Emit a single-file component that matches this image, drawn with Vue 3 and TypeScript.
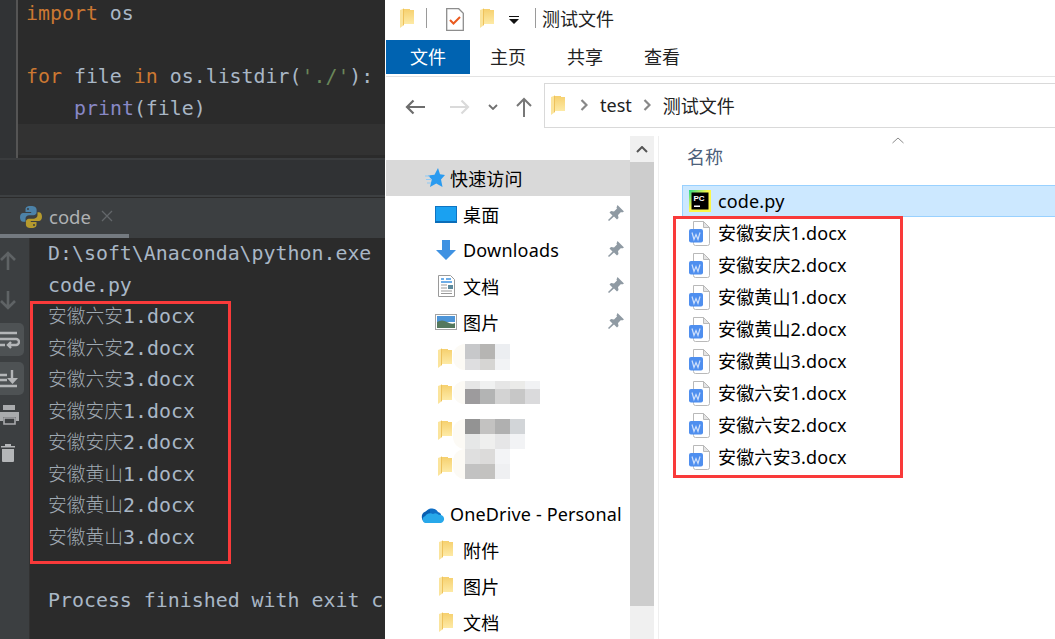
<script setup lang="ts">
const consoleLines = [
  ['安徽六安', '1.docx'], ['安徽六安', '2.docx'], ['安徽六安', '3.docx'],
  ['安徽安庆', '1.docx'], ['安徽安庆', '2.docx'],
  ['安徽黄山', '1.docx'], ['安徽黄山', '2.docx'], ['安徽黄山', '3.docx'],
]
const files = ['安徽安庆1', '安徽安庆2', '安徽黄山1', '安徽黄山2', '安徽黄山3', '安徽六安1', '安徽六安2', '安徽六安3']
  .map((n) => n + '.docx')
const pinned = [
  { label: '桌面', icon: 'desk' }, { label: 'Downloads', icon: 'down' },
  { label: '文档', icon: 'doc' }, { label: '图片', icon: 'pic' },
]
const blurred = [
  { top: 4, columns: 3, first: 15, second: 11, cells: ['#c7c8ca', '#b6b5b3', '#eceef1', '#dedee0', '#d6d5d3', '#f2f3f5'] },
  { top: 5, columns: 5, first: 8, second: 15, cells: ['#e6e6e6', '#f0f1f1', '#e6e6e6', '#ebebe9', '#f1f2f4', '#9d9b9d', '#b3b4b4', '#d3d3d3', '#c7c7c7', '#dadadc'] },
  { top: 7, columns: 4, first: 15, second: 15, cells: ['#939393', '#c3c2c1', '#b0b0b0', '#d2d5d8', '#e6e7e7', '#efefee', '#e6e6e7', '#f2f3f5'] },
  { top: 1, columns: 3, first: 15, second: 15, cells: ['#dfdfdf', '#dcdbda', '#f3f4f6', '#c2c2c2', '#c3c2c0', '#eff0f2'] },
]
const oneDrive = ['附件', '图片', '文档']
</script>

<template>
  <div class="root">
    <svg class="defs" width="0" height="0" aria-hidden="true">
      <defs>
        <linearGradient id="fgrad" x1="0" y1="0" x2="0" y2="1">
          <stop offset="0" stop-color="#f6d06e" />
          <stop offset="1" stop-color="#fdeaa6" />
        </linearGradient>
        <symbol id="folder" viewBox="0 0 14 20">
          <path d="M3 1h7v1h4v14H3z" fill="url(#fgrad)" />
          <path d="M0 2l4-1.500V17L0 20z" fill="#fbe49c" />
          <path d="M4 .5V17l-1 .4V1z" fill="#eec25c" />
        </symbol>
        <symbol id="pin" viewBox="0 0 18 18">
          <path d="M10.500 1l6.500 6.500-2 1-1-.5-3 3 .5 3-1.500 1.500-3-3L2 17l-1-1 4.500-4.500-3-3L4 7l3 .5 3-3-.5-1z" fill="#8f9aa3" />
        </symbol>
        <symbol id="word" viewBox="0 0 21 25">
          <path d="M4.500.5h10l6 6v16a2 2 0 0 1-2 2h-12a2 2 0 0 1-2-2z" fill="#fff" stroke="#b9b9b9" />
          <path d="M14.500.5v6h6z" fill="#e4e4e4" stroke="#b9b9b9" />
          <rect y="8" width="14" height="13.500" rx="2" fill="#4f8fef" />
          <path d="M3 11.500l2 7 2-5 2 5 2-7" fill="none" stroke="#cfe0fb" stroke-width="1.200" />
        </symbol>
      </defs>
    </svg>

    <section class="ide">
      <div class="editor">
        <div class="gutter"></div>
        <div class="code">
          <div class="cl"><span class="kw">import</span> os</div>
          <div class="cl"></div>
          <div class="cl"><span class="kw">for</span> file <span class="kw">in</span> os.listdir(<span class="str">'./'</span>):</div>
          <div class="cl indent"><span class="fn">print</span>(file)</div>
          <div class="cl current"></div>
        </div>
      </div>
      <div class="runbar"></div>
      <div class="tabs">
        <div class="run-tab">
          <svg class="py" viewBox="0 0 22 22" width="22" height="22">
            <path d="M10.800 0C6 0 5.500 1.800 5.500 3.500V6h5.700v1H3.200C1.200 7 0 8.700 0 11.200s1.200 4.500 3.200 4.500h2.300v-2.900c0-2 1.700-3.500 3.600-3.500h4.500c1.700 0 3-1.400 3-3V3.500C16.600 1.600 14.800 0 10.800 0zM8 2a1 1 0 1 1 0 2 1 1 0 0 1 0-2z" fill="#4c82a8" />
            <path d="M11.200 22c4.800 0 5.300-1.800 5.300-3.500V16h-5.700v-1h8c2 0 3.200-1.700 3.200-4.200s-1.200-4.500-3.200-4.500h-1.300v2.900c0 2-2.200 3.500-4.100 3.500H8.900c-1.700 0-3 1.400-3 3v2.800c0 1.900 1.300 3.500 5.300 3.500zM14 20a1 1 0 1 1 0-2 1 1 0 0 1 0 2z" fill="#b59a2e" />
          </svg>
          <span class="run-name">code</span>
          <svg class="x" viewBox="0 0 12 12" width="12" height="12"><path d="M1 1l10 10M11 1L1 11" stroke="#63676a" stroke-width="1.300" /></svg>
        </div>
      </div>
      <div class="run">
        <div class="side">
          <svg class="ti up" viewBox="0 0 16 20" width="16" height="20"><path d="M8 19V2M1 9l7-7 7 7" fill="none" stroke="#5f6365" stroke-width="2.600" /></svg>
          <svg class="ti dn" viewBox="0 0 16 20" width="16" height="20"><path d="M8 1v17M1 11l7 7 7-7" fill="none" stroke="#5f6365" stroke-width="2.600" /></svg>
          <div class="tbtn first">
            <svg viewBox="0 0 20 18" width="20" height="18"><path d="M0 2h17M0 8h16a2.500 2.500 0 0 1 0 6H9M0 14h5M11 11l-3 3 3 3" fill="none" stroke="#b4b6b8" stroke-width="2.400" /></svg>
          </div>
          <div class="tbtn second">
            <svg viewBox="0 0 20 20" width="20" height="20"><path d="M0 6h7M0 11h7M0 17h17M12 1v11" fill="none" stroke="#b4b6b8" stroke-width="2.400" /><path d="M7 9h11l-5.500 6z" fill="#b4b6b8" /></svg>
          </div>
          <svg class="ti pr" viewBox="0 0 20 20" width="20" height="20"><path d="M3 0h12v5H3zM0 7h19v9h-3v-4H3v4H0z" fill="#a9abad" /><path d="M4 13h11v6H4z" fill="none" stroke="#a9abad" stroke-width="1.600" /></svg>
          <svg class="ti tr" viewBox="0 0 16 19" width="16" height="19"><path d="M1 3h14v1.600H1zM5 1h6v2H5zM2 6h12v12a1 1 0 0 1-1 1H3a1 1 0 0 1-1-1z" fill="#b4b6b8" /></svg>
        </div>
        <div class="out">
          <div class="ol">D:\soft\Anaconda\python.exe</div>
          <div class="ol">code.py</div>
          <div class="redbox-left">
            <div v-for="l in consoleLines" :key="l[0] + l[1]" class="ol"><span class="zh">{{ l[0] }}</span>{{ l[1] }}</div>
          </div>
          <div class="ol finish">Process finished with exit c</div>
        </div>
      </div>
    </section>

    <section class="ex">
      <header class="title">
        <svg class="f f-t1"><use href="#folder" /></svg>
        <i class="sep s1"></i>
        <svg class="chk" viewBox="0 0 18 23" width="18" height="23">
          <path d="M.7.7h12l4.600 4.600v17H.7z" fill="#fff" stroke="#8d8d8d" stroke-width="1.300" />
          <path d="M4 12l3.500 3.500L14 9" fill="none" stroke="#ea5a1f" stroke-width="2" />
        </svg>
        <svg class="f f-t2"><use href="#folder" /></svg>
        <svg class="drop" viewBox="0 0 10 8" width="10" height="8"><path d="M0 0h10v1H0zM0 3h10L5 8z" fill="#111" /></svg>
        <i class="sep s2"></i>
        <span class="title-text">测试文件</span>
      </header>
      <nav class="ribbon">
        <span class="rtab active">文件</span>
        <span class="rtab t1">主页</span>
        <span class="rtab t2">共享</span>
        <span class="rtab t3">查看</span>
      </nav>
      <div class="navbar">
        <svg class="back" viewBox="0 0 20 16" width="20" height="16"><path d="M20 8H2M8.500 1.500L2 8l6.500 6.500" fill="none" stroke="#6d6d6d" stroke-width="2.200" /></svg>
        <svg class="fwd" viewBox="0 0 20 16" width="20" height="16"><path d="M0 8h18M11.500 1.500L18 8l-6.500 6.500" fill="none" stroke="#dadada" stroke-width="2.200" /></svg>
        <svg class="chev" viewBox="0 0 10 6" width="10" height="6"><path d="M1 1l4 4 4-4" fill="none" stroke="#707070" stroke-width="1.800" /></svg>
        <svg class="upa" viewBox="0 0 16 20" width="16" height="20"><path d="M8 20V2M1 9l7-7 7 7" fill="none" stroke="#777" stroke-width="2" /></svg>
        <div class="addr">
          <svg class="f"><use href="#folder" /></svg>
          <svg class="crumb c1" viewBox="0 0 8 12" width="8" height="12"><path d="M1.500 1l5 5-5 5" fill="none" stroke="#888" stroke-width="2.200" /></svg>
          <span class="path-a">test</span>
          <svg class="crumb c2" viewBox="0 0 8 12" width="8" height="12"><path d="M1.500 1l5 5-5 5" fill="none" stroke="#888" stroke-width="2.200" /></svg>
          <span class="path-b">测试文件</span>
        </div>
      </div>
      <div class="main">
        <aside class="tree">
          <div class="row quick">
            <svg class="star" viewBox="0 0 20 20" width="20" height="20">
              <path d="M13 0l2 6.200 5 .8-4 4.500 1.500 7.500-6.200-3.600L5 19l1.800-7.500L3 7.500l6.500-.8z" fill="#2a9bf0" />
              <path d="M0 8h5M1 11.500h5M2 15h4" stroke="#8ec9f5" stroke-width="1.200" />
            </svg>
            <span class="quick-t">快速访问</span>
          </div>
          <div v-for="p in pinned" :key="p.label" class="row sub">
            <span class="ico">
              <svg v-if="p.icon === 'desk'" viewBox="0 0 22 17" width="22" height="17">
                <rect x=".5" y=".5" width="21" height="15" fill="#1aa1f1" stroke="#0f74c2" />
                <path d="M0 15h22v2H0z" fill="#0b6db8" />
              </svg>
              <svg v-else-if="p.icon === 'down'" viewBox="0 0 20 20" width="20" height="20">
                <path d="M6 0h8v10h6L10 20 0 10h6z" fill="#3f92e2" />
              </svg>
              <svg v-else-if="p.icon === 'doc'" viewBox="0 0 17 22" width="17" height="22">
                <path d="M.5.500h12l4 4v17H.5z" fill="#fff" stroke="#9a9a9a" />
                <path d="M3 4h3M8 4h5M3 7h11" stroke="#3f93e0" stroke-width="1.300" />
                <path d="M3 10h6M3 13h6M3 16h11M3 18.500h11" stroke="#999" />
                <rect x="10" y="10" width="5" height="4" fill="#5d8a9c" />
              </svg>
              <svg v-else viewBox="0 0 22 16" width="22" height="16">
                <rect x=".5" y=".5" width="21" height="15" fill="#fff" stroke="#a4a4a4" />
                <rect x="2" y="2" width="18" height="6" fill="#4d95d8" />
                <path d="M2 8q5-3 10 0t8 1v5H2z" fill="#54785d" />
              </svg>
            </span>
            <span class="lab">{{ p.label }}</span>
            <svg class="pin"><use href="#pin" /></svg>
          </div>
          <div v-for="(b, i) in blurred" :key="i" class="row sub blur-row">
            <span class="ico"><svg class="f"><use href="#folder" /></svg></span>
            <div class="cream" :style="{ marginTop: b.top + 'px', height: b.first + b.second + 'px' }"></div>
            <div class="mosaic" :style="{ marginTop: b.top + 'px', gridTemplateColumns: `repeat(${b.columns}, 15px)`, gridTemplateRows: `${b.first}px ${b.second}px` }">
              <i v-for="(c, j) in b.cells" :key="j" :style="{ background: c }"></i>
            </div>
          </div>
          <div class="row drive">
            <svg class="cloud" viewBox="0 0 24 17" width="24" height="17">
              <path d="M4 8.500a7 7 0 0 1 13-2.500 5 5 0 0 1 3 2v2H4z" fill="#0f6fc6" />
              <path d="M6 17a6 6 0 0 1-1.500-11.500A7 7 0 0 1 9 4v4z" fill="#0a5fb0" />
              <path d="M5 17a3.500 3.500 0 0 1-1-6.800 6 6 0 0 1 8-2.200 5 5 0 0 1 6 1 4 4 0 0 1 2 8z" fill="#28a8ea" />
            </svg>
            <span class="quick-t">OneDrive - Personal</span>
          </div>
          <div v-for="d in oneDrive" :key="d" class="row sub">
            <span class="ico"><svg class="f"><use href="#folder" /></svg></span>
            <span class="lab">{{ d }}</span>
          </div>
        </aside>
        <div class="scroll">
          <div class="sb-up"><svg viewBox="0 0 12 7" width="12" height="7"><path d="M1 6l5-5 5 5" fill="none" stroke="#555" stroke-width="2" /></svg></div>
          <div class="sb-thumb"></div>
        </div>
        <div class="list">
          <div class="list-head">
            <span class="col">名称</span>
            <svg class="caret" viewBox="0 0 12 7" width="12" height="7"><path d="M.5 6L6 1l5.500 5" fill="none" stroke="#8a8a8a" /></svg>
          </div>
          <div class="item selected">
            <svg class="pc" viewBox="0 0 22 22" width="22" height="22">
              <defs><linearGradient id="pcg" x1="0" y1="0" x2="1" y2="1"><stop offset="0" stop-color="#21d789" /><stop offset=".45" stop-color="#fcf84a" /></linearGradient></defs>
              <rect width="22" height="22" fill="url(#pcg)" />
              <rect x="2.500" y="2.500" width="17" height="17" fill="#000" />
              <rect x="5" y="15.500" width="6" height="1.500" fill="#fff" />
              <text x="4.500" y="11" class="pc-t">PC</text>
            </svg>
            <span>code.py</span>
          </div>
          <div v-for="f in files" :key="f" class="item">
            <svg class="w"><use href="#word" /></svg>
            <span>{{ f }}</span>
          </div>
          <div class="redbox-right"></div>
        </div>
      </div>
    </section>
  </div>
</template>

<style>
html, body { margin: 0; background: #fff; overflow: hidden; }
</style>

<style scoped>
.root { display: flex; width: 1055px; height: 639px; overflow: hidden; font-family: "Noto Sans", "Noto Sans CJK SC", sans-serif; }
.defs { position: absolute; }
.ide { width: 385px; flex: none; display: flex; flex-direction: column; background: #2b2b2b; font-family: "DejaVu Sans Mono", "Noto Sans CJK SC", monospace; font-size: 19.9px; color: #a9b7c6; overflow: hidden; }
.editor { height: 158px; flex: none; display: flex; border-bottom: 2px solid #3a3c3e; overflow: hidden; }
.gutter { width: 16px; background: #313335; border-right: 2px solid #555; flex: none; }
.code { flex: 1; padding-left: 8px; margin-top: -2px; min-width: 0; }
.cl { height: 31.5px; line-height: 31.5px; white-space: pre; }
.indent { padding-left: 48px; }
.current { background: #323232; margin-left: -8px; margin-top: -.5px; }
.kw { color: #cc7832; }
.str { color: #6a8759; }
.fn { color: #8888c6; }
.runbar { height: 35px; flex: none; background: #303234; border-bottom: 2px solid #3d4042; }
.tabs { height: 40px; flex: none; background: #3c3f41; margin-top: 1px; }
.run-tab { width: 129px; height: 40px; box-sizing: border-box; border-bottom: 4px solid #747a80; display: flex; align-items: center; font-family: "Noto Sans", sans-serif; font-size: 18.500px; color: #afb1b3; padding-left: 20px; }
.py { flex: none; margin-top: 1px; }
.run-name { margin-left: 7px; }
.x { margin-left: 10px; }
.run { flex: 1; display: flex; min-height: 0; }
.side { width: 29px; flex: none; background: #3c3f41; border-right: 1px solid #323232; display: flex; flex-direction: column; }
.ti { display: block; flex: none; }
.up { margin: 13px 0 0 0; }
.dn { margin: 19px 0 0 0; }
.tbtn { width: 24px; height: 33px; flex: none; background: #4e5254; border-radius: 0 5px 5px 0; display: flex; align-items: center; }
.first { margin-top: 13px; }
.second { margin-top: 6px; }
.pr { margin: 10px 0 0 0; }
.tr { margin: 18px 0 0 0; }
.out { flex: 1; min-width: 0; white-space: nowrap; }
.ol { height: 31.5px; line-height: 31.5px; padding-left: 18px; color: #a9b7c6; }
.zh { font-size: 18.750px; font-weight: 300; color: #a0aab3; }
.redbox-left { width: 201px; height: 263px; box-sizing: border-box; outline: 3px solid #f93a3a; outline-offset: -3px; }
.finish { margin-top: 20.500px; }

.ex { flex: 1; min-width: 0; display: flex; flex-direction: column; background: #fff; color: #000; font-size: 18px; }
.title { height: 36px; flex: none; display: flex; align-items: center; margin-bottom: 4px; }
.f { width: 14px; height: 20px; display: block; flex: none; }
.f-t1 { margin-left: 15px; }
.sep { width: 1px; height: 20px; background: #9a9a9a; flex: none; }
.s1 { margin-left: 12px; }
.chk { margin-left: 19px; flex: none; margin-top: 2px; }
.f-t2 { margin-left: 16px; }
.drop { margin-left: 15px; margin-top: 3px; }
.s2 { margin-left: 16px; }
.title-text { margin-left: 6px; color: #222; }
.ribbon { height: 34px; flex: none; display: flex; align-items: center; margin-left: 1px; border-bottom: 1px solid transparent; }
.rtab { line-height: 34px; color: #222; flex: none; }
.active { width: 84px; height: 34px; background: #0063b1; color: #fff; text-align: center; }
.t1 { margin-left: 20px; }
.t2 { margin-left: 41px; }
.t3 { margin-left: 41px; }
.navbar { height: 60px; flex: none; margin-top: 1px; margin-left: 1px; border-top: 1px solid #e3e3e3; box-sizing: border-box; display: flex; align-items: center; }
.back { margin-left: 19px; flex: none; }
.fwd { margin-left: 25px; flex: none; }
.chev { margin-left: 18px; flex: none; }
.upa { margin-left: 18px; flex: none; }
.addr { flex: 1; height: 45px; margin-left: 12px; margin-top: -3px; box-sizing: border-box; border: 1px solid #d9d9d9; border-right: none; display: flex; align-items: center; padding-left: 6px; }
.crumb { flex: none; }
.c1 { margin-left: 15px; }
.path-a { margin-left: 12px; color: #222; }
.c2 { margin-left: 11px; }
.path-b { margin-left: 12px; color: #222; }
.main { flex: 1; min-height: 0; display: flex; }
.tree { width: 245px; flex: none; padding-top: 24px; box-sizing: border-box; overflow: hidden; }
.row { height: 36px; display: flex; align-items: center; white-space: nowrap; position: relative; }
.quick { background: #d9d9d9; margin-left: 1px; }
.star { margin-left: 39px; flex: none; }
.quick-t { margin-left: 5px; margin-bottom: 1px; letter-spacing: .15px; }
.sub { padding-left: 50px; }
.ico { width: 22px; flex: none; display: flex; justify-content: center; }
.lab { margin-left: 6px; margin-bottom: 1px; letter-spacing: .2px; }
.pin { width: 18px; height: 18px; flex: none; position: absolute; left: 222px; top: 8px; }
.blur-row { align-items: flex-start; }
.blur-row .ico { margin-top: 8px; justify-content: flex-start; padding-left: 3px; width: 19px; }
.cream { width: 12px; margin-left: -4px; background: #fcfaf5; border-radius: 12px 0 0 12px; flex: none; }
.mosaic { display: grid; flex: none; }
.drive { margin-top: 12px; }
.cloud { margin-left: 36px; flex: none; }
.drive .quick-t { margin-left: 5px; }
.scroll { width: 24px; flex: none; background: #f0f0f0; display: flex; flex-direction: column; }
.sb-up { height: 26px; display: flex; align-items: center; justify-content: center; }
.sb-thumb { height: 444px; background: #cdcdcd; }
.list { flex: 1; min-width: 0; margin-left: 4px; border-left: 1px solid #efefef; position: relative; padding-left: 23px; }
.list-head { height: 49px; display: flex; align-items: flex-start; }
.col { color: #4c607a; margin: 9px 0 0 5px; line-height: 24px; }
.caret { margin: 1px 0 0 169px; flex: none; }
.item { height: 32px; display: flex; align-items: center; padding-left: 7px; box-sizing: border-box; white-space: nowrap; }
.item span { margin-left: 7px; margin-bottom: 2px; letter-spacing: .15px; }
.selected { background: #cce8ff; border: 1px solid #99d1ff; border-right: none; padding-left: 6px; }
.selected span { margin-bottom: 0; }
.w { width: 21px; height: 25px; flex: none; margin-right: 1px; }
.pc { flex: none; }
.pc-t { font: bold 8px "Liberation Sans", sans-serif; fill: #fff; }
.redbox-right { position: absolute; left: 14px; top: 80px; width: 230px; height: 262px; box-sizing: border-box; border: 3px solid #f93a3a; }
</style>
